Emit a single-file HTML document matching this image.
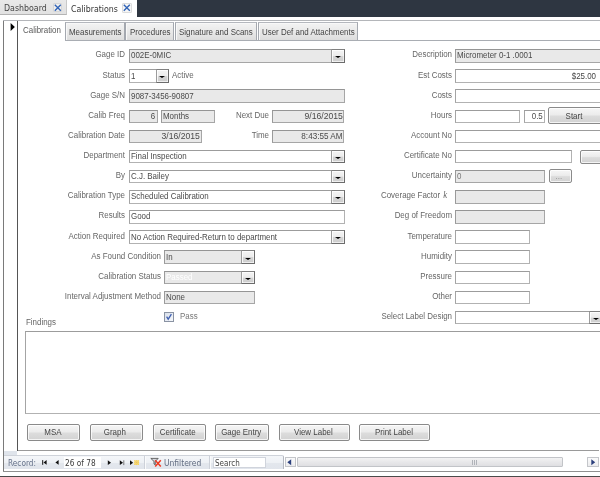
<!DOCTYPE html>
<html><head><meta charset="utf-8"><title>Calibrations</title>
<style>
html,body{margin:0;padding:0}
body{width:600px;height:477px;overflow:hidden;position:relative;background:#fff;font-family:"Liberation Sans",Arial,sans-serif;font-size:9px;color:#444}
div,span{box-sizing:border-box}
#root{position:absolute;left:0;top:0;width:600px;height:477px;overflow:hidden;will-change:transform}
#root>div{position:absolute}
.lb{height:13px;line-height:12px;white-space:nowrap;font-size:9.2px;color:#666;transform:scaleX(0.864);transform-origin:left center}
.lb.r{transform-origin:right center;text-align:right}
.fd{border:1px solid #b2b2b2;border-top-color:#9c9c9c;border-left-color:#a4a4a4;white-space:nowrap;font-size:9.2px;color:#4a4a4a}
.fd .tx{position:absolute;left:1.3px;top:0.2px;line-height:11px;transform:scaleX(0.864);transform-origin:left center}
.fd .tx.ra{transform-origin:right center}
.fd.g{border-color:#a6a6a6;border-top-color:#959595;border-left-color:#9a9a9a}
.fd .dd{position:absolute;right:-1px;top:-1px;width:13.5px;bottom:-1px;background:linear-gradient(#f4f4f4 0%,#ececec 48%,#d4d4d4 54%,#cecece 100%);border:1px solid #6c6c6c;border-left-color:#9c9c9c;border-top-color:#808080;box-shadow:inset 0.8px 0.8px 0 #fff,inset -0.6px -0.8px 0 #fafafa}
.fd .dd i{position:absolute;left:2.8px;top:6.1px;width:0;height:0;border-left:3px solid transparent;border-right:3px solid transparent;border-top:2.9px solid #000}
.btn{border:1px solid #8a8a8a;border-radius:2px;background:linear-gradient(#f6f6f6 0%,#ececec 45%,#dcdcdc 55%,#d2d2d2 100%);text-align:center;font-size:9.2px;color:#444;white-space:nowrap;overflow:hidden;box-shadow:inset 0 0 0 1px rgba(255,255,255,0.75);padding-right:2px}
.btn>span{display:inline-block;transform:scaleX(0.864);transform-origin:center}
.tab>span{display:inline-block;transform:scaleX(0.864);transform-origin:left center}
.cb{width:10px;height:10px;border:1px solid #8a93a3;background:linear-gradient(135deg,#d8dfea,#f6f8fb)}
.cb svg{position:absolute;left:0;top:0}
.dt{white-space:nowrap;font-family:"DejaVu Sans","Liberation Sans",sans-serif;transform:scaleX(0.875);transform-origin:left center}
.xb{border-radius:1px}
.tab{border:1px solid #a4a8af;border-top-color:#b4b7bd;border-bottom:none;background:linear-gradient(#f3f3f3,#e8e8e8 55%,#dddddd);box-shadow:inset 1px 1px 0 #f8f8f8;font-size:9.2px;color:#444;text-align:left;line-height:18.4px;white-space:nowrap}
.tab.sel{background:#fff;border:none;box-shadow:none;line-height:18.6px;color:#5a5a5a}
.nv{font-family:"DejaVu Sans","Liberation Sans",sans-serif;font-size:8.7px;line-height:12px;white-space:nowrap;transform:scaleX(0.85);transform-origin:left center}
</style></head><body><div id="root">
<!-- top document tabs -->
<div style="left:0;top:0;width:600px;height:16.5px;background:#2e3641"></div>
<div style="left:0;top:0;width:66.5px;height:20px;background:#fff"></div>
<div style="left:0;top:0;width:66.5px;height:15.4px;background:linear-gradient(#e9e9e9,#e2e2e2);border-bottom:1px solid #b4b4b4;border-right:1px solid #c8c8c8"></div>
<div style="left:66.5px;top:0;width:70px;height:17px;background:#fff"></div>
<div class="dt" style="left:3.7px;top:0.5px;font-size:9px;color:#444;line-height:14px">Dashboard</div>
<div class="dt" style="left:70.5px;top:1.9px;font-size:9px;color:#333;line-height:14px">Calibrations</div>
<div class="xb" style="left:52.8px;top:2.8px;width:9.6px;height:9.6px;border:1px solid #d6d6d6;background:#eeeeee"><svg width="8" height="8" viewBox="0 0 8 8" style="position:absolute;left:0;top:0"><path d="M0.8 0.8L6.8 6.8M6.8 0.8L0.8 6.8" stroke="#2f62b6" stroke-width="1.35"/></svg></div>
<div class="xb" style="left:122.3px;top:3.3px;width:9.6px;height:9.6px;border:1px solid #dcdcdc;background:#f6f6f6"><svg width="8" height="8" viewBox="0 0 8 8" style="position:absolute;left:0;top:0"><path d="M0.8 0.8L6.8 6.8M6.8 0.8L0.8 6.8" stroke="#2f62b6" stroke-width="1.35"/></svg></div>
<!-- form frame -->
<div style="left:3px;top:20.2px;width:597px;height:1px;background:#b4b6ba"></div>
<div style="left:3.2px;top:20.5px;width:1px;height:451px;background:#7a7a7a"></div>
<div style="left:17px;top:21px;width:1px;height:430px;background:#555"></div>
<div style="left:4px;top:21.5px;width:13px;height:426px;background:#fff"></div>
<svg style="position:absolute;left:9.8px;top:23.2px" width="6" height="9" viewBox="0 0 6 9"><path d="M0.6 0L4.9 4L0.6 8Z" fill="#000"/></svg>
<!-- tab control -->
<div style="left:65px;top:40px;width:535px;height:1px;background:#a9adb3"></div>
<div class="tab" style="left:65px;top:21.5px;width:59.5px;height:18.5px;padding-left:2.9px"><span>Measurements</span></div>
<div class="tab" style="left:125px;top:21.5px;width:49.2px;height:18.5px;padding-left:3.9px"><span>Procedures</span></div>
<div class="tab" style="left:174.6px;top:21.5px;width:82.6px;height:18.5px;padding-left:3.5px"><span>Signature and Scans</span></div>
<div class="tab" style="left:257.5px;top:21.5px;width:100.7px;height:18.5px;padding-left:3.4px"><span>User Def and Attachments</span></div>
<div class="tab sel" style="left:18px;top:21px;width:47px;height:20px;padding-left:5px"><span>Calibration</span></div>
<div class="lb r" style="left:-35.400000000000006px;width:160px;top:48.40px;">Gage ID</div>
<div class="fd  g" style="left:129px;top:49.20px;width:215.5px;height:13.5px;background:#e9e9e9;"><span class="tx" style="">002E-0MIC</span><span class="dd"><i></i></span></div>
<div class="lb r" style="left:-35.400000000000006px;width:160px;top:68.53px;">Status</div>
<div class="fd " style="left:129px;top:69.33px;width:40px;height:13.5px;background:#fff;"><span class="tx" style="">1</span><span class="dd"><i></i></span></div>
<div class="lb" style="left:172px;top:69.33px">Active</div>
<div class="lb r" style="left:-35.400000000000006px;width:160px;top:88.65px;">Gage S/N</div>
<div class="fd  g" style="left:129px;top:89.45px;width:215.5px;height:13.5px;background:#e9e9e9;"><span class="tx" style="top:0.3px;">9087-3456-90807</span></div>
<div class="lb r" style="left:-35.400000000000006px;width:160px;top:108.78px;">Calib Freq</div>
<div class="fd  g" style="left:129px;top:109.58px;width:28.5px;height:13.5px;background:#e9e9e9;"><span class="tx ra" style="top:0.3px;left:auto;right:1px">6</span></div>
<div class="fd  g" style="left:160.8px;top:109.58px;width:54.69999999999999px;height:13.5px;background:#e9e9e9;"><span class="tx" style="top:0.3px;">Months</span></div>
<div class="lb r" style="left:108.5px;width:160px;top:108.78px;">Next Due</div>
<div class="fd  g" style="left:271.8px;top:109.58px;width:72.69999999999999px;height:13.5px;background:#e9e9e9;"><span class="tx ra" style="top:0.3px;transform:scaleX(0.94);left:auto;right:1px">9/16/2015</span></div>
<div class="lb r" style="left:-35.400000000000006px;width:160px;top:128.90px;">Calibration Date</div>
<div class="fd  g" style="left:129px;top:129.70px;width:73px;height:13.5px;background:#e9e9e9;"><span class="tx ra" style="top:0.3px;transform:scaleX(0.94);left:auto;right:1px">3/16/2015</span></div>
<div class="lb r" style="left:108.5px;width:160px;top:128.90px;">Time</div>
<div class="fd  g" style="left:271.8px;top:129.70px;width:72.69999999999999px;height:13.5px;background:#e9e9e9;"><span class="tx ra" style="top:0.3px;transform:scaleX(0.885);left:auto;right:1px">8:43:55 AM</span></div>
<div class="lb r" style="left:-35.400000000000006px;width:160px;top:149.02px;">Department</div>
<div class="fd " style="left:129px;top:149.82px;width:215.5px;height:13.5px;background:#fff;"><span class="tx" style="">Final Inspection</span><span class="dd"><i></i></span></div>
<div class="lb r" style="left:-35.400000000000006px;width:160px;top:169.15px;">By</div>
<div class="fd " style="left:129px;top:169.95px;width:215.5px;height:13.5px;background:#fff;"><span class="tx" style="">C.J. Bailey</span><span class="dd"><i></i></span></div>
<div class="lb r" style="left:-35.400000000000006px;width:160px;top:189.27px;">Calibration Type</div>
<div class="fd " style="left:129px;top:190.07px;width:215.5px;height:13.5px;background:#fff;"><span class="tx" style="">Scheduled Calibration</span><span class="dd"><i></i></span></div>
<div class="lb r" style="left:-35.400000000000006px;width:160px;top:209.40px;">Results</div>
<div class="fd " style="left:129px;top:210.20px;width:215.5px;height:13.5px;background:#fff;"><span class="tx" style="top:0.3px;">Good</span></div>
<div class="lb r" style="left:-35.400000000000006px;width:160px;top:229.52px;">Action Required</div>
<div class="fd " style="left:129px;top:230.32px;width:215.5px;height:13.5px;background:#fff;"><span class="tx" style="">No Action Required-Return to department</span><span class="dd"><i></i></span></div>
<div class="lb r" style="left:0.8000000000000114px;width:160px;top:249.65px;">As Found Condition</div>
<div class="fd  g" style="left:163.8px;top:250.45px;width:91.19999999999999px;height:13.5px;background:#e9e9e9;"><span class="tx" style="">In</span><span class="dd"><i></i></span></div>
<div class="lb r" style="left:0.8000000000000114px;width:160px;top:269.77px;">Calibration Status</div>
<div class="fd  g" style="left:163.8px;top:270.57px;width:91.19999999999999px;height:13.5px;background:#e9e9e9;"><span class="tx" style="color:#fff;">Passed</span><span class="dd"><i></i></span></div>
<div class="lb r" style="left:0.8000000000000114px;width:160px;top:289.90px;">Interval Adjustment Method</div>
<div class="fd  g" style="left:163.8px;top:290.70px;width:91.19999999999999px;height:13.5px;background:#e9e9e9;"><span class="tx" style="top:0.3px;">None</span></div>
<div class="cb" style="left:164.3px;top:312.43px"><svg width="8" height="8" viewBox="0 0 8 8"><path d="M1.6 3.6 L3.2 6.2 L6.4 1.2" fill="none" stroke="#4060b0" stroke-width="1.3"/></svg></div>
<div class="lb" style="left:180px;top:309.82px;color:#777">Pass</div>
<div class="lb r" style="left:291.7px;width:160px;top:48.40px;">Description</div>
<div class="fd  g" style="left:455.1px;top:49.20px;width:150.89999999999998px;height:13.5px;background:#e9e9e9;"><span class="tx" style="top:0.3px;">Micrometer 0-1 .0001</span></div>
<div class="lb r" style="left:291.7px;width:160px;top:68.53px;">Est Costs</div>
<div class="fd " style="left:455.1px;top:69.33px;width:150.89999999999998px;height:13.5px;background:#fff;"></div>
<div class="lb r" style="left:495.5px;width:100px;top:69.62px;color:#444">$25.00</div>
<div class="lb r" style="left:291.7px;width:160px;top:88.65px;">Costs</div>
<div class="fd " style="left:455.1px;top:89.45px;width:150.89999999999998px;height:13.5px;background:#fff;"></div>
<div class="lb r" style="left:291.7px;width:160px;top:108.78px;">Hours</div>
<div class="fd " style="left:455.1px;top:109.58px;width:65.39999999999998px;height:13.5px;background:#fff;"></div>
<div class="fd " style="left:523.7px;top:109.58px;width:21.299999999999955px;height:13.5px;background:#fff;"><span class="tx ra" style="top:0.3px;left:auto;right:1px">0.5</span></div>
<div class="btn" style="left:548px;top:107.375px;width:58px;height:16.299999999999997px;line-height:15.3px"><span style="position:absolute;left:-1px;top:0.6px;width:52px;text-align:center">Start</span></div>
<div class="lb r" style="left:291.7px;width:160px;top:128.90px;">Account No</div>
<div class="fd " style="left:455.1px;top:129.70px;width:150.89999999999998px;height:13.5px;background:#fff;"></div>
<div class="lb r" style="left:291.7px;width:160px;top:149.02px;">Certificate No</div>
<div class="fd " style="left:455.1px;top:149.82px;width:117.39999999999998px;height:13.5px;background:#fff;"></div>
<div class="btn" style="left:580px;top:149.52499999999998px;width:26px;height:14.100000000000023px;line-height:13.1px"></div>
<div class="lb r" style="left:291.7px;width:160px;top:169.15px;">Uncertainty</div>
<div class="fd  g" style="left:455.1px;top:169.95px;width:90.39999999999998px;height:13.5px;background:#e9e9e9;"><span class="tx" style="color:#777;top:0.3px;">0</span></div>
<div class="btn" style="left:548.5px;top:169.45px;width:23.0px;height:14.0px;line-height:13.0px"><span style="color:#999;position:relative;top:0px">...</span></div>
<div class="lb r" style="left:286.5px;width:160px;top:189.27px;">Coverage Factor <i style="font-family:'Liberation Serif',serif;font-size:10px;padding-left:1px">k</i></div>
<div class="fd  g" style="left:455.1px;top:190.07px;width:90.39999999999998px;height:13.5px;background:#e9e9e9;"></div>
<div class="lb r" style="left:291.7px;width:160px;top:209.40px;">Deg of Freedom</div>
<div class="fd  g" style="left:455.1px;top:210.20px;width:90.39999999999998px;height:13.5px;background:#e9e9e9;"></div>
<div class="lb r" style="left:291.7px;width:160px;top:229.52px;">Temperature</div>
<div class="fd " style="left:455.1px;top:230.32px;width:74.89999999999998px;height:13.5px;background:#fff;"></div>
<div class="lb r" style="left:291.7px;width:160px;top:249.65px;">Humidity</div>
<div class="fd " style="left:455.1px;top:250.45px;width:74.89999999999998px;height:13.5px;background:#fff;"></div>
<div class="lb r" style="left:291.7px;width:160px;top:269.77px;">Pressure</div>
<div class="fd " style="left:455.1px;top:270.57px;width:74.89999999999998px;height:13.5px;background:#fff;"></div>
<div class="lb r" style="left:291.7px;width:160px;top:289.90px;">Other</div>
<div class="fd " style="left:455.1px;top:290.70px;width:74.89999999999998px;height:13.5px;background:#fff;"></div>
<div class="lb r" style="left:291.7px;width:160px;top:310.02px;">Select Label Design</div>
<div class="fd " style="left:455.1px;top:310.82px;width:147.19999999999993px;height:13.5px;background:#fff;"><span class="dd"><i></i></span></div>
<div class="lb" style="left:25.8px;top:315.6px">Findings</div>
<div class="fd" style="left:24.5px;top:330.7px;width:590px;height:83.1px;background:#fff"></div>
<div class="btn" style="left:27px;top:424.2px;width:53px;height:16.5px;line-height:15.5px"><span>MSA</span></div>
<div class="btn" style="left:89.5px;top:424.2px;width:53.0px;height:16.5px;line-height:15.5px"><span>Graph</span></div>
<div class="btn" style="left:152.5px;top:424.2px;width:53.0px;height:16.5px;line-height:15.5px"><span>Certificate</span></div>
<div class="btn" style="left:215px;top:424.2px;width:53.5px;height:16.5px;line-height:15.5px"><span>Gage Entry</span></div>
<div class="btn" style="left:278.5px;top:424.2px;width:71.0px;height:16.5px;line-height:15.5px"><span>View Label</span></div>
<div class="btn" style="left:359px;top:424.2px;width:71px;height:16.5px;line-height:15.5px"><span>Print Label</span></div>
<!-- bottom -->
<div style="left:17.5px;top:450px;width:581.5px;height:1px;background:#9a9a9a"></div>
<div style="left:4px;top:450.5px;width:13px;height:5px;background:#dfe4eb"></div>
<div style="left:4px;top:454.7px;width:280px;height:14.8px;background:linear-gradient(#f4f6f9 0%,#eef1f5 50%,#e3e7ed 56%,#e1e5ec 100%);border-top:1px solid #cfd3da;border-right:1px solid #b4b8c0;border-top-right-radius:2px"></div>
<div style="left:3px;top:470.7px;width:597px;height:1px;background:#909090"></div>
<div style="left:0;top:475.7px;width:600px;height:2px;background:#4a4a4a"></div>
<div class="nv" style="left:8px;top:457px;color:#66728a">Record:</div>
<div style="left:63.5px;top:457px;width:37.5px;height:11px;background:#fff"></div>
<div class="nv" style="left:64.6px;top:456.8px;color:#3a3a3a">26 of 78</div>
<svg style="position:absolute;left:40px;top:458px" width="110" height="10" viewBox="0 0 110 10"><g fill="#111"><rect x="2.2" y="2.1" width="1" height="4.7"/><path d="M6.6 2V6.8L3.5 4.4Z"/><path d="M18.6 2V6.8L15.4 4.4Z"/><path d="M67.8 2.3V7.1L71 4.7Z"/><path d="M79.8 2.3V7.1L83 4.7Z"/><path d="M90 2.3V7.1L93.2 4.7Z"/></g><rect x="83.3" y="2.3" width="1" height="4.8" fill="#777"/><path d="M94.2 2.2h4.8v4.8h-4.8z" fill="#f7dc7a"/><path d="M95.4 3.4h2.4v2.4h-2.4z" fill="#fbe9a8"/><path d="M94.2 2.2l4.8 4.8M99 2.2l-4.8 4.8M96.6 2v5.2M94 4.6h5.2" stroke="#eec24a" stroke-width="0.5"/></svg>
<div style="left:144px;top:455.7px;width:1px;height:13.8px;background:#cdd1d9"></div>
<div style="left:145px;top:455.7px;width:1px;height:13.8px;background:#fafbfc"></div>
<svg style="position:absolute;left:150px;top:456px" width="13" height="12" viewBox="0 0 13 12"><path d="M0.8 2.4H8.2L5.3 5.4V8.8L4 8V5.4Z" fill="#d5d9e0" stroke="#4a4a4a" stroke-width="0.8"/><path d="M5.2 4.3L10.8 10.5M10.8 4.3L5.2 10.5" stroke="#ee3a22" stroke-width="1.5"/></svg>
<div class="nv" style="left:163.6px;top:457px;color:#606b80;transform:scaleX(0.872)">Unfiltered</div>
<div style="left:209px;top:455.7px;width:1px;height:13.8px;background:#cdd1d9"></div>
<div style="left:210px;top:455.7px;width:1px;height:13.8px;background:#fafbfc"></div>
<div style="left:213px;top:456.8px;width:52.5px;height:11.4px;background:#fff;border:1px solid #d0d4dc"></div>
<div class="nv" style="left:215px;top:456.8px;color:#444;transform:scaleX(0.83)">Search</div>
<!-- scrollbar -->
<div style="left:284.5px;top:457.2px;width:11.7px;height:10px;border:1px solid #c4c6ca;background:linear-gradient(#fbfbfb,#ececee)"></div>
<svg style="position:absolute;left:287px;top:459px" width="5" height="7" viewBox="0 0 5 7"><path d="M4.2 0.2L0.3 3.2L4.2 6.3Z" fill="#2b3f7c"/></svg>
<div style="left:296.8px;top:457.3px;width:266.5px;height:9.8px;border:1px solid #c2c4c8;border-radius:1px;background:linear-gradient(#f3f3f4,#e8e8ea 50%,#dfdfe2)"></div>
<div style="left:472.2px;top:460.3px;width:5px;height:4.4px;background:repeating-linear-gradient(90deg,#b0b3b9 0,#b0b3b9 1px,transparent 1px,transparent 2px)"></div>
<div style="left:586.8px;top:457.2px;width:12px;height:10.3px;border:1px solid #c4c6ca;background:linear-gradient(#fbfbfb,#ececee)"></div>
<svg style="position:absolute;left:591px;top:459.3px" width="5" height="7" viewBox="0 0 5 7"><path d="M0.3 0.2L4.2 3.2L0.3 6.3Z" fill="#2b3f7c"/></svg>
</div></body></html>
